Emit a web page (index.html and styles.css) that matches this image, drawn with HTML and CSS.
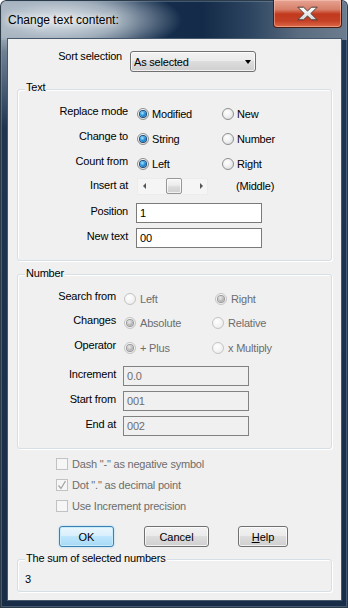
FILE: index.html
```html
<!DOCTYPE html>
<html lang="en">
<head>
    <meta charset="UTF-8">
    <title>Change text content:</title>
    <link rel="stylesheet" href="styles.css">
</head>
<body>
    <div class="window">
        <div class="titlebar">
            <span class="title">Change text content:</span>
            <button class="close-btn">
                <svg width="69" height="27" viewBox="0 0 69 27">
                    <defs>
                        <linearGradient id="xfill" x1="0" y1="0" x2="0" y2="1">
                            <stop offset="0" stop-color="#ffffff"/>
                            <stop offset="1" stop-color="#d6d6d6"/>
                        </linearGradient>
                    </defs>
                    <polygon points="24.5,7 30.5,7 34.5,11 38.5,7 44.5,7 38,13.5 44.5,20 38.5,20 34.5,16 30.5,20 24.5,20 31,13.5" fill="url(#xfill)" stroke="#4a3a36" stroke-width="1"/>
                </svg>
            </button>
        </div>

        <div class="client">
            <div class="sort-row">
                <span class="sort-label">Sort selection</span>
                <div class="combo">
                    <span>As selected</span>
                    <span class="combo-arrow"></span>
                </div>
            </div>

            <div class="group group-text">
                <span class="group-title">Text</span>
                <div class="row">
                    <span class="label">Replace mode</span>
                    <span class="option first"><span class="radio checked"></span>Modified</span>
                    <span class="option"><span class="radio"></span>New</span>
                </div>
                <div class="row">
                    <span class="label">Change to</span>
                    <span class="option first"><span class="radio checked"></span>String</span>
                    <span class="option"><span class="radio"></span>Number</span>
                </div>
                <div class="row">
                    <span class="label">Count from</span>
                    <span class="option first"><span class="radio checked"></span>Left</span>
                    <span class="option"><span class="radio"></span>Right</span>
                </div>
                <div class="row row-slider">
                    <span class="label">Insert at</span>
                    <div class="slider">
                        <span class="arrow-left"></span>
                        <span class="thumb"></span>
                        <span class="arrow-right"></span>
                    </div>
                    <span class="slider-value">(Middle)</span>
                </div>
                <div class="row row-edit">
                    <span class="label">Position</span>
                    <div class="edit">1</div>
                </div>
                <div class="row row-edit">
                    <span class="label">New text</span>
                    <div class="edit">00</div>
                </div>
            </div>

            <div class="group group-number">
                <span class="group-title">Number</span>
                <div class="row row-a">
                    <span class="label">Search from</span>
                    <span class="option first wide disabled"><span class="radio"></span>Left</span>
                    <span class="option disabled"><span class="radio checked"></span>Right</span>
                </div>
                <div class="row row-a">
                    <span class="label">Changes</span>
                    <span class="option first disabled"><span class="radio checked"></span>Absolute</span>
                    <span class="option disabled"><span class="radio"></span>Relative</span>
                </div>
                <div class="row row-b">
                    <span class="label">Operator</span>
                    <span class="option first disabled"><span class="radio checked"></span>+ Plus</span>
                    <span class="option disabled"><span class="radio"></span>x Multiply</span>
                </div>
                <div class="edits">
                    <div class="row row-edit">
                        <span class="label">Increment</span>
                        <div class="edit disabled">0.0</div>
                    </div>
                    <div class="row row-edit">
                        <span class="label">Start from</span>
                        <div class="edit disabled">001</div>
                    </div>
                    <div class="row row-edit">
                        <span class="label">End at</span>
                        <div class="edit disabled">002</div>
                    </div>
                </div>
            </div>

            <div class="checks">
                <div class="check-row"><span class="check"></span>Dash "-" as negative symbol</div>
                <div class="check-row">
                    <span class="check">
                        <svg width="10" height="10" viewBox="0 0 10 10"><path d="M1.5 5.5 L4 8.5 L8.5 1" fill="none" stroke="#a3a3a3" stroke-width="1.3"/></svg>
                    </span>Dot "." as decimal point
                </div>
                <div class="check-row"><span class="check"></span>Use Increment precision</div>
            </div>

            <div class="buttons">
                <button class="btn btn-ok">OK</button>
                <button class="btn btn-cancel">Cancel</button>
                <button class="btn btn-help"><u>H</u>elp</button>
            </div>

            <div class="group group-sum">
                <span class="group-title">The sum of selected numbers</span>
                <div class="sum-value">3</div>
            </div>
        </div>
    </div>
</body>
</html>
```

FILE: styles.css
```css
* {
    box-sizing: border-box;
}

body {
    margin: 0;
    font-family: "Liberation Sans", Arial, sans-serif;
    font-size: 11px;
    letter-spacing: -0.2px;
    color: #000;
}

.window {
    width: 348px;
    height: 608px;
    display: flex;
    flex-direction: column;
    padding: 0 6px 7px 7px;
    border-radius: 6px 6px 0 0;
    background:
        radial-gradient(ellipse 120px 36px at 62px 20px, rgba(228, 234, 240, 0.95) 0, rgba(178, 190, 201, 0.85) 50%, rgba(150, 165, 180, 0) 100%),
        linear-gradient(rgba(140, 156, 172, 0.85), rgba(140, 156, 172, 0)) 0 38px / 7px 90px no-repeat,
        linear-gradient(to right, #9eabb7 0, #8595a6 12%, #3e5670 28%, #17304f 40%, #132a48 58%, #2d4560 72%, #5a6c80 86%, #6d7d8f 100%) 0 0 / 100% 40px no-repeat,
        linear-gradient(#1f3654, #192d48);
    box-shadow: inset 0 0 0 1px #2d3a48, inset 0 0 0 2px rgba(150, 172, 196, 0.35);
}

.titlebar {
    height: 38px;
    display: flex;
    justify-content: space-between;
    align-items: flex-start;
}

.title {
    margin: 13px 0 0 1px;
    font-size: 12px;
    letter-spacing: 0;
    line-height: 14px;
    text-shadow: 0 0 6px #fff, 0 0 10px rgba(255, 255, 255, 0.8);
}

.close-btn {
    width: 69px;
    height: 28px;
    padding: 0;
    border: 1px solid #4a1d12;
    border-top: none;
    border-radius: 0 0 4px 4px;
    background: linear-gradient(#e6a393 0%, #d7806a 35%, #c2391d 52%, #c44126 78%, #de6a48 100%);
    box-shadow: inset 0 0 0 1px rgba(255, 210, 195, 0.45);
    display: flex;
    align-items: center;
    justify-content: center;
}

.close-btn svg {
    display: block;
}

.client {
    flex: 1;
    display: flex;
    flex-direction: column;
    padding: 12px 9px 0 9px;
    background: #f0f0f0;
    border: 1px solid #46586b;
}

/* sort selection */

.sort-row {
    display: flex;
    align-items: center;
    height: 21px;
}

.sort-label {
    width: 105px;
    margin-right: 8px;
    padding-bottom: 11px;
    text-align: right;
}

.combo {
    width: 126px;
    height: 21px;
    display: flex;
    align-items: center;
    padding: 0 4px 0 3px;
    border: 1px solid #707070;
    border-radius: 3px;
    background: linear-gradient(#f2f2f2 0%, #ebebeb 45%, #dddddd 50%, #cfcfcf 100%);
    box-shadow: inset 0 0 0 1px rgba(255, 255, 255, 0.7);
}

.combo-arrow {
    margin-left: auto;
    width: 0;
    height: 0;
    border-top: 4px solid #000;
    border-left: 3.5px solid transparent;
    border-right: 3.5px solid transparent;
}

/* group boxes */

.group {
    position: relative;
    border: 1px solid #d5dfe5;
    border-radius: 3px;
    box-shadow: inset 1px 1px 0 #fff, 1px 1px 0 #fff;
}

.group-title {
    position: absolute;
    top: -8px;
    left: 7px;
    padding: 0 1px;
    line-height: 13px;
    background: #f0f0f0;
}

.group-text {
    height: 172px;
    margin-top: 17px;
    padding-top: 11px;
}

.group-text .group-title {
    top: -9px;
}

.group-number {
    height: 175px;
    margin-top: 13px;
    padding-top: 12px;
}

.group-sum {
    height: 33px;
    margin-top: 12px;
    padding: 13px 0 0 7px;
}

.sum-value {
    line-height: 13px;
}

/* rows */

.row {
    display: flex;
    align-items: center;
    height: 25px;
    white-space: nowrap;
}

.label {
    flex: none;
    width: 110px;
    margin-right: 9px;
    padding-bottom: 6px;
    text-align: right;
}

.group-number .label {
    width: 98px;
    margin-right: 8px;
}

.row-a {
    height: 24px;
}

.row-b {
    height: 26px;
}

.row-slider {
    height: 20px;
    margin-bottom: 4px;
}

.row-slider .label {
    padding-bottom: 2px;
}

.row-edit .label {
    padding-bottom: 4px;
}

.row-edit .label + .edit {
    margin-left: -1px;
}

.edits {
    margin-top: 2px;
}

/* radio buttons */

.option {
    display: flex;
    align-items: center;
}

.option.first {
    width: 85px;
}

.group-number .option.first {
    width: 88px;
}

.group-number .option.first.wide {
    width: 91px;
}

.radio {
    flex: none;
    width: 12px;
    height: 12px;
    margin-right: 3px;
    display: flex;
    align-items: center;
    justify-content: center;
    border: 1px solid #8e8f8f;
    border-radius: 50%;
    background: radial-gradient(circle at 40% 35%, #ffffff 0, #f1f1f1 45%, #d5d5d5 100%);
}

.radio.checked::after {
    content: "";
    width: 6px;
    height: 6px;
    border-radius: 50%;
    background: radial-gradient(circle at 40% 35%, #a8e6ff 0, #2a97e0 45%, #0c4f98 100%);
    box-shadow: 0 0 0 1px #1b4a78;
}

.group-number .radio {
    margin-right: 4px;
}

.disabled {
    color: #6d6d6d;
}

.option.disabled .radio {
    border-color: #c4c4c4;
    background: radial-gradient(circle at 40% 35%, #ffffff 0, #f4f4f4 50%, #e6e6e6 100%);
}

.option.disabled .radio.checked::after {
    background: radial-gradient(circle at 40% 35%, #ededed 0, #b8b8b8 55%, #a0a0a0 100%);
    box-shadow: 0 0 0 1px #9a9a9a;
}

/* slider */

.slider {
    width: 71px;
    height: 17px;
    display: flex;
    align-items: center;
    padding-left: 5px;
    background: #f5f5f5;
    border: 1px solid #ececec;
}

.arrow-left {
    width: 0;
    height: 0;
    border-right: 3px solid #555;
    border-top: 3.5px solid transparent;
    border-bottom: 3.5px solid transparent;
}

.arrow-right {
    width: 0;
    height: 0;
    margin-left: 18px;
    border-left: 3px solid #555;
    border-top: 3.5px solid transparent;
    border-bottom: 3.5px solid transparent;
}

.thumb {
    width: 16px;
    height: 16px;
    margin-left: 20px;
    border: 1px solid #979797;
    border-radius: 2px;
    background: linear-gradient(#f7f7f7 0%, #ececec 45%, #dcdcdc 55%, #d0d0d0 100%);
    box-shadow: inset 0 0 0 1px rgba(255, 255, 255, 0.7);
}

.slider-value {
    margin-left: 28px;
}

/* text boxes */

.edit {
    width: 126px;
    height: 20px;
    padding-left: 3px;
    line-height: 18px;
    background: #fff;
    border: 1px solid #7a7a7a;
}

.edit.disabled {
    background: #f0f0f0;
    border-color: #828282;
}

/* check boxes */

.checks {
    margin-top: 4px;
    padding-left: 39px;
    color: #6d6d6d;
}

.check-row {
    display: flex;
    align-items: center;
    height: 21px;
}

.check {
    flex: none;
    width: 12px;
    height: 12px;
    margin-right: 4px;
    display: flex;
    align-items: center;
    justify-content: center;
    border: 1px solid #c2c2c2;
    background: #f6f6f6;
}

.check svg {
    display: block;
}

/* buttons */

.buttons {
    display: flex;
    margin-top: 10px;
    padding-left: 42px;
}

.btn {
    height: 21px;
    padding: 0;
    font: inherit;
    color: #000;
    border: 1px solid #707070;
    border-radius: 3px;
    background: linear-gradient(#f2f2f2 0%, #ebebeb 45%, #dddddd 50%, #cfcfcf 100%);
    box-shadow: inset 0 0 0 1px rgba(255, 255, 255, 0.7);
}

.btn-ok {
    width: 55px;
    border-color: #3c7fb1;
    background: linear-gradient(#eaf6fd 0%, #d9f0fc 45%, #bee6fd 50%, #a7d9f5 100%);
    box-shadow: inset 0 0 0 1px #c6ecfc, 0 0 2px #8fd2f5;
}

.btn-cancel {
    width: 65px;
    margin-left: 30px;
}

.btn-help {
    width: 50px;
    margin-left: 29px;
}
```
